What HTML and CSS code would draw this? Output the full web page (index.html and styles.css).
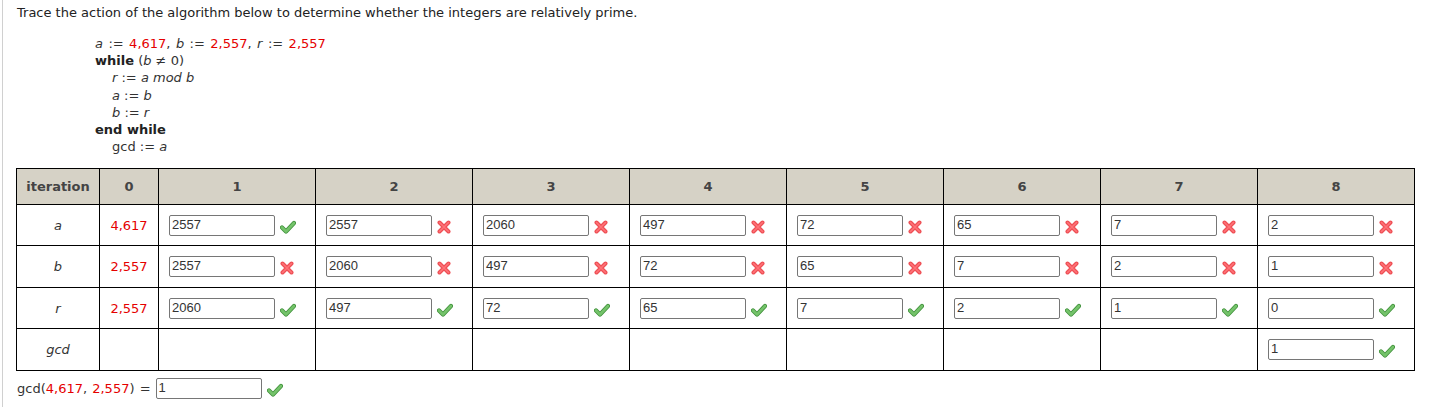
FILE: index.html
```html
<!DOCTYPE html>
<html>
<head>
<meta charset="utf-8">
<link rel="stylesheet" href="styles.css">
</head>
<body>
<div class="page">
  <p class="prompt">Trace the action of the algorithm below to determine whether the integers are relatively prime.</p>
  <div class="algo">
    <div class="line first"><i>a</i> := <span class="red">4,617</span>, <i>b</i> := <span class="red">2,557</span>, <i>r</i> := <span class="red">2,557</span></div>
    <div class="line"><b>while</b> (<i>b</i> ≠ 0)</div>
    <div class="line ind"><i>r</i> := <i>a mod b</i></div>
    <div class="line ind"><i>a</i> := <i>b</i></div>
    <div class="line ind"><i>b</i> := <i>r</i></div>
    <div class="line"><b>end while</b></div>
    <div class="line ind">gcd := <i>a</i></div>
  </div>
  <table class="trace">
    <colgroup>
      <col class="c-it"><col class="c-0">
      <col class="c-n"><col class="c-n"><col class="c-n"><col class="c-n"><col class="c-n"><col class="c-n"><col class="c-n"><col class="c-n">
    </colgroup>
    <tr class="head">
      <th>iteration</th><th>0</th><th>1</th><th>2</th><th>3</th><th>4</th><th>5</th><th>6</th><th>7</th><th>8</th>
    </tr>
    <tr class="r1">
      <td class="lbl">a</td><td class="red">4,617</td>
      <td><div class="ans"><span class="box">2557</span><span class="ok"></span></div></td>
      <td><div class="ans"><span class="box">2557</span><span class="bad"></span></div></td>
      <td><div class="ans"><span class="box">2060</span><span class="bad"></span></div></td>
      <td><div class="ans"><span class="box">497</span><span class="bad"></span></div></td>
      <td><div class="ans"><span class="box">72</span><span class="bad"></span></div></td>
      <td><div class="ans"><span class="box">65</span><span class="bad"></span></div></td>
      <td><div class="ans"><span class="box">7</span><span class="bad"></span></div></td>
      <td><div class="ans"><span class="box">2</span><span class="bad"></span></div></td>
    </tr>
    <tr class="r2">
      <td class="lbl">b</td><td class="red">2,557</td>
      <td><div class="ans"><span class="box">2557</span><span class="bad"></span></div></td>
      <td><div class="ans"><span class="box">2060</span><span class="bad"></span></div></td>
      <td><div class="ans"><span class="box">497</span><span class="bad"></span></div></td>
      <td><div class="ans"><span class="box">72</span><span class="bad"></span></div></td>
      <td><div class="ans"><span class="box">65</span><span class="bad"></span></div></td>
      <td><div class="ans"><span class="box">7</span><span class="bad"></span></div></td>
      <td><div class="ans"><span class="box">2</span><span class="bad"></span></div></td>
      <td><div class="ans"><span class="box">1</span><span class="bad"></span></div></td>
    </tr>
    <tr class="r1">
      <td class="lbl">r</td><td class="red">2,557</td>
      <td><div class="ans"><span class="box">2060</span><span class="ok"></span></div></td>
      <td><div class="ans"><span class="box">497</span><span class="ok"></span></div></td>
      <td><div class="ans"><span class="box">72</span><span class="ok"></span></div></td>
      <td><div class="ans"><span class="box">65</span><span class="ok"></span></div></td>
      <td><div class="ans"><span class="box">7</span><span class="ok"></span></div></td>
      <td><div class="ans"><span class="box">2</span><span class="ok"></span></div></td>
      <td><div class="ans"><span class="box">1</span><span class="ok"></span></div></td>
      <td><div class="ans"><span class="box">0</span><span class="ok"></span></div></td>
    </tr>
    <tr class="r2">
      <td class="lbl">gcd</td><td></td>
      <td></td><td></td><td></td><td></td><td></td><td></td><td></td>
      <td><div class="ans"><span class="box">1</span><span class="ok"></span></div></td>
    </tr>
  </table>
  <div class="final">
    <span>gcd(<span class="red">4,617</span>, <span class="red">2,557</span>) = </span>
    <div class="ans"><span class="box">1</span><span class="ok"></span></div>
  </div>
</div>
<svg width="0" height="0" style="position:absolute">
  <defs>
    <symbol id="chk" viewBox="0 0 16 14">
      <path d="M2 7.5 L6 11.5 L14 3" fill="none" stroke="#3f8f3a" stroke-width="4.2" stroke-linecap="round" stroke-linejoin="round"/>
      <path d="M2 7.5 L6 11.5 L14 3" fill="none" stroke="#74c36a" stroke-width="2.6" stroke-linecap="round" stroke-linejoin="round"/>
    </symbol>
    <symbol id="crs" viewBox="0 0 14 14">
      <path d="M2.5 2.5 L11.5 11.5 M11.5 2.5 L2.5 11.5" fill="none" stroke="#ee4f55" stroke-width="4" stroke-linecap="round"/>
      <path d="M2.5 2.5 L11.5 11.5 M11.5 2.5 L2.5 11.5" fill="none" stroke="#ff7378" stroke-width="1.6" stroke-linecap="round"/>
    </symbol>
  </defs>
</svg>
<script>
document.querySelectorAll('.ok').forEach(function(e){e.innerHTML='<svg width="16" height="14"><use href="#chk"/></svg>';});
document.querySelectorAll('.bad').forEach(function(e){e.innerHTML='<svg width="14" height="14"><use href="#crs"/></svg>';});
</script>
</body>
</html>
```
FILE: styles.css
```css
html, body {
  margin: 0;
  padding: 0;
  background: #fff;
}
body {
  font-family: "DejaVu Sans", Verdana, sans-serif;
  font-size: 13px;
  color: #333;
}
.page {
  margin-left: 2px;
  border-left: 1px solid #d0d0d0;
  padding-left: 13px;
  min-height: 407px;
  box-sizing: border-box;
  padding-top: 5px;
}
.prompt {
  margin: 0 0 0 1px;
  line-height: 16px;
  color: #222;
}
.red { color: #e50000; }
.algo {
  margin: 14px 0 0 79px;
  line-height: 17.2px;
}
.algo .first { word-spacing: 1.3px; }
.algo .ind { padding-left: 17px; }
.algo b { color: #222; }
.trace {
  margin-top: 13px;
  border-collapse: collapse;
  table-layout: fixed;
  width: 1399px;
}
.c-it { width: 83px; }
.c-0 { width: 59px; }
.c-n { width: 157px; }
.trace th, .trace td {
  border: 1px solid #000;
  padding: 0;
  text-align: center;
}
.trace th {
  background: #d6d2c6;
  color: #444;
  font-weight: bold;
  height: 35px;
}
.trace tr.r1 td { height: 40px; }
.trace tr.r2 td { height: 41px; }
.lbl { font-style: italic; }
.trace td .ans { padding-left: 10px; }
.ans {
  display: flex;
  align-items: center;
  gap: 5px;
}
.box {
  display: block;
  box-sizing: border-box;
  width: 106px;
  height: 21px;
  border: 1px solid #767676;
  border-radius: 2px;
  padding: 0 0 0 2px;
  text-align: left;
  font-family: "Liberation Sans", Arial, sans-serif;
  font-size: 13px;
  line-height: 18px;
  color: #333;
}
.ok, .bad {
  display: block;
  width: 16px;
  height: 14px;
  margin-top: 3px;
}
.ok svg, .bad svg { display: block; }
.final {
  display: flex;
  align-items: center;
  margin-top: 7px;
  margin-left: 1px;
}
.final > span { margin-right: 5px; word-spacing: 1px; }
```
